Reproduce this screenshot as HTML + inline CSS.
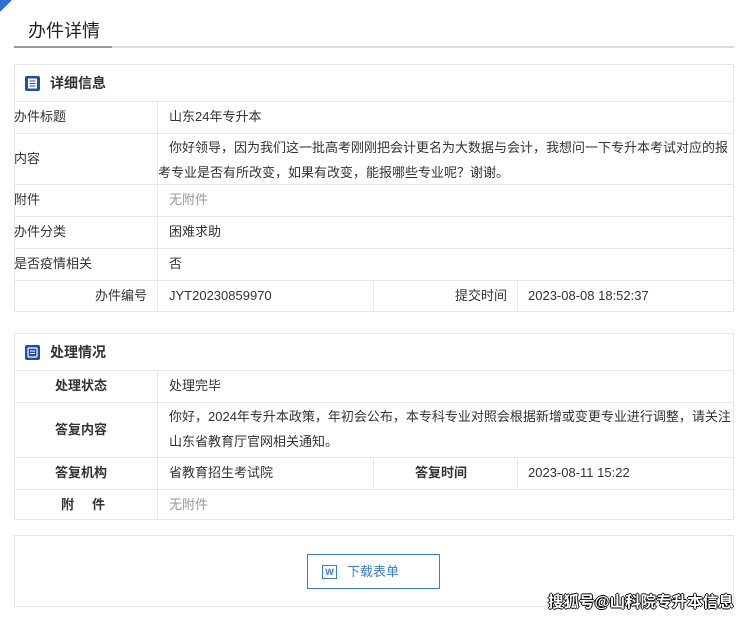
<!DOCTYPE html>
<html><head><meta charset="utf-8"><style>
*{margin:0;padding:0;box-sizing:border-box}
body{width:748px;height:621px;background:#fff;position:relative;overflow:hidden;font-family:"Liberation Sans","Noto Sans CJK SC",sans-serif;font-size:13px;color:#333}
.a{position:absolute}
.l{position:absolute;background:#e6e6e6}
.t{position:absolute;white-space:nowrap;line-height:18px}
.b{font-weight:bold}
.g{color:#999}
</style></head><body>
<div class="a" style="left:0;top:0;width:0;height:0;border-top:12px solid #2f6fd8;border-right:12px solid transparent"></div>
<div class="t" style="left:28px;top:19px;font-size:18px;line-height:24px;color:#222">办件详情</div>
<div class="a" style="left:14px;top:46px;width:720px;height:2px;background:#ddd"></div>
<div class="a" style="left:14px;top:46px;width:98px;height:2px;background:#999"></div>

<div class="a" style="left:14px;top:64px;width:720px;height:248px;border:1px solid #e6e6e6"></div>
<div class="l" style="left:14px;top:101px;width:720px;height:1px"></div>
<div class="l" style="left:14px;top:133px;width:720px;height:1px"></div>
<div class="l" style="left:14px;top:184px;width:720px;height:1px"></div>
<div class="l" style="left:14px;top:216px;width:720px;height:1px"></div>
<div class="l" style="left:14px;top:248px;width:720px;height:1px"></div>
<div class="l" style="left:14px;top:280px;width:720px;height:1px"></div>
<div class="l" style="left:157px;top:101px;width:1px;height:211px"></div>
<div class="l" style="left:373px;top:280px;width:1px;height:32px"></div>
<div class="l" style="left:517px;top:280px;width:1px;height:32px"></div>
<svg class="a" style="left:25px;top:76px" width="15" height="15" viewBox="0 0 15 15"><rect x="0" y="0" width="15" height="15" rx="2" fill="#1d4fa8"/><rect x="3" y="2.5" width="9" height="10" fill="#fff"/><path d="M4.5 5h6M4.5 7.5h6M4.5 10h6" stroke="#1d4fa8" stroke-width="1"/></svg>
<div class="t b" style="left:50px;top:74px;font-size:14px">详细信息</div>
<div class="t" style="left:14px;top:108px">办件标题</div>
<div class="t" style="left:169px;top:108px">山东24年专升本</div>
<div class="t" style="left:14px;top:150px">内容</div>
<div class="a" style="left:158px;top:135px;width:576px;line-height:25px;text-indent:11px;padding-right:2px">你好领导，因为我们这一批高考刚刚把会计更名为大数据与会计，我想问一下专升本考试对应的报考专业是否有所改变，如果有改变，能报哪些专业呢？谢谢。</div>
<div class="t" style="left:14px;top:191px">附件</div>
<div class="t g" style="left:169px;top:191px">无附件</div>
<div class="t" style="left:14px;top:223px">办件分类</div>
<div class="t" style="left:169px;top:223px">困难求助</div>
<div class="t" style="left:14px;top:255px">是否疫情相关</div>
<div class="t" style="left:169px;top:255px">否</div>
<div class="t" style="left:95px;top:287px">办件编号</div>
<div class="t" style="left:169px;top:287px">JYT20230859970</div>
<div class="t" style="left:455px;top:287px">提交时间</div>
<div class="t" style="left:528px;top:287px">2023-08-08 18:52:37</div>

<div class="a" style="left:14px;top:333px;width:720px;height:187px;border:1px solid #e6e6e6"></div>
<div class="l" style="left:14px;top:370px;width:720px;height:1px"></div>
<div class="l" style="left:14px;top:402px;width:720px;height:1px"></div>
<div class="l" style="left:14px;top:457px;width:720px;height:1px"></div>
<div class="l" style="left:14px;top:489px;width:720px;height:1px"></div>
<div class="l" style="left:157px;top:370px;width:1px;height:150px"></div>
<div class="l" style="left:373px;top:457px;width:1px;height:32px"></div>
<div class="l" style="left:517px;top:457px;width:1px;height:32px"></div>
<svg class="a" style="left:25px;top:345px" width="15" height="15" viewBox="0 0 15 15"><rect x="0" y="0" width="15" height="15" rx="2" fill="#1d4fa8"/><rect x="3" y="3" width="9" height="9" rx="1" fill="none" stroke="#fff" stroke-width="1.2"/><path d="M5 6h5M5 8.5h5" stroke="#fff" stroke-width="1"/></svg>
<div class="t b" style="left:50px;top:343px;font-size:14px">处理情况</div>
<div class="t b" style="left:55px;top:377px">处理状态</div>
<div class="t" style="left:169px;top:377px">处理完毕</div>
<div class="t b" style="left:55px;top:421px">答复内容</div>
<div class="a" style="left:169px;top:404px;width:565px;line-height:25px">你好，2024年专升本政策，年初会公布，本专科专业对照会根据新增或变更专业进行调整，请关注山东省教育厅官网相关通知。</div>
<div class="t b" style="left:55px;top:464px">答复机构</div>
<div class="t" style="left:169px;top:464px">省教育招生考试院</div>
<div class="t b" style="left:415px;top:464px">答复时间</div>
<div class="t" style="left:528px;top:464px">2023-08-11 15:22</div>
<div class="t b" style="left:61px;top:496px">附&nbsp;&nbsp;&nbsp;&nbsp;&nbsp;件</div>
<div class="t g" style="left:169px;top:496px">无附件</div>

<div class="a" style="left:14px;top:535px;width:720px;height:72px;border:1px solid #e6e6e6"></div>
<div class="a" style="left:307px;top:554px;width:133px;height:35px;border:1px solid #3a7bd5"></div>
<div class="a" style="left:322px;top:565px;width:15px;height:14px;border:1px solid #3a7bd5;font-size:9px;line-height:12px;text-align:center;color:#3a7bd5;font-weight:bold">W</div>
<div class="t" style="left:347px;top:563px;color:#3a7bd5">下载表单</div>
<div class="t b" style="left:548px;top:594px;font-size:15.5px;color:#fff;text-shadow:1px 0 0 #000,-1px 0 0 #000,0 1px 0 #000,0 -1px 0 #000">搜狐号@山科院专升本信息</div>
</body></html>
